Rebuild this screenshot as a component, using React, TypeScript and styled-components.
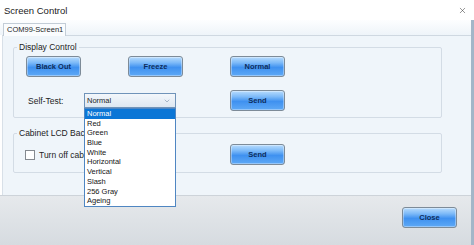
import styled, { createGlobalStyle } from 'styled-components';
import { X, ChevronDown } from 'lucide-react';

const GlobalStyle = createGlobalStyle`
  html, body {
    margin: 0;
    padding: 0;
    background: #fff;
  }
  body {
    font-family: "Liberation Sans", Arial, sans-serif;
    color: #1e1e1e;
  }
`;

const patterns = [
  'Normal',
  'Red',
  'Green',
  'Blue',
  'White',
  'Horizontal',
  'Vertical',
  'Slash',
  '256 Gray',
  'Ageing',
];

const Window = styled.div`
  width: 474px;
  height: 245px;
  display: flex;
  flex-direction: column;
  overflow: hidden;
  background: #fff;
`;

const TitleBar = styled.div`
  height: 20px;
  flex: none;
  display: flex;
  align-items: center;
  justify-content: space-between;
  padding: 0 7px 0 4px;
  font-size: 9.5px;
  color: #222;
  svg {
    color: #3a3a3a;
  }
`;

const Frame = styled.div`
  flex: 1;
  display: flex;
  flex-direction: column;
  border-right: 3px solid #a3b6c8;
  min-height: 0;
`;

const TabStrip = styled.div`
  height: 15px;
  flex: none;
  display: flex;
  align-items: flex-end;
  padding-left: 3px;
  background: linear-gradient(#fdfeff, #eef4f9);
`;

const Tab = styled.div`
  height: 13px;
  width: 63px;
  box-sizing: border-box;
  border: 1px solid #c3cdd7;
  border-bottom: none;
  background: #fafcfe;
  font-size: 7.5px;
  line-height: 12px;
  padding-left: 3px;
  margin-bottom: -1px;
  position: relative;
`;

const Panel = styled.div`
  height: 160px;
  flex: none;
  box-sizing: border-box;
  margin-left: 2px;
  border-top: 1px solid #cfd8e1;
  border-left: 1px solid #d8e0e8;
  background: #eff5fa;
  padding: 6px 0 0 10px;
  display: flex;
  flex-direction: column;
  gap: 10px;
`;

const Group = styled.fieldset`
  margin: 0;
  padding: 0;
  width: 429px;
  min-width: 0;
  box-sizing: border-box;
  border: 1px solid #d3dce5;
  border-radius: 2px;
`;

const Legend = styled.legend`
  padding: 0 2px;
  margin-left: 3px;
  font-size: 8.5px;
  line-height: 10px;
  color: #222;
`;

const GroupBody = styled.div<{ $pad: string }>`
  padding: ${(p) => p.$pad};
  display: flex;
  flex-direction: column;
  gap: 13px;
`;

const Row = styled.div`
  display: flex;
  align-items: center;
  gap: 47px;
`;

const FieldRow = styled.div`
  display: flex;
  align-items: center;
`;

const Btn = styled.button`
  width: 55px;
  height: 21px;
  flex: none;
  padding: 0;
  border: 1px solid #7d8b98;
  border-radius: 3px;
  background: linear-gradient(#b8dcfd 0%, #7dbaf8 30%, #3f91f0 55%, #5ea9f6 100%);
  box-shadow: inset 0 0 0 1px rgba(255, 255, 255, 0.35);
  font-family: "Liberation Sans", Arial, sans-serif;
  font-weight: bold;
  font-size: 7.5px;
  color: #0d2d5c;
`;

const SendBtn = styled(Btn)`
  margin-left: 54px;
`;

const FieldLabel = styled.span`
  width: 58px;
  box-sizing: border-box;
  padding-left: 2px;
  font-size: 8.5px;
`;

const SelectWrap = styled.div`
  position: relative;
  width: 92px;
  height: 15px;
  flex: none;
`;

const SelectBox = styled.div`
  height: 100%;
  box-sizing: border-box;
  border: 1px solid #6f93b9;
  background: linear-gradient(#f3f7fb, #dde7f1);
  display: flex;
  align-items: center;
  justify-content: space-between;
  padding: 0 4px 0 2px;
  font-size: 7.5px;
  svg {
    color: #6d86a3;
  }
`;

const DropList = styled.ul`
  position: absolute;
  left: 0;
  top: 15px;
  width: 92px;
  height: 99px;
  box-sizing: border-box;
  margin: 0;
  padding: 0;
  list-style: none;
  border: 1px solid #4f86c2;
  background: #fff;
  z-index: 5;
`;

const DropItem = styled.li<{ $active?: boolean }>`
  height: 9.7px;
  line-height: 9.7px;
  padding-left: 2px;
  font-size: 7.5px;
  color: ${(p) => (p.$active ? '#fff' : '#151515')};
  background: ${(p) => (p.$active ? '#0b76d6' : 'transparent')};
`;

const CheckLabel = styled.label`
  width: 205px;
  flex: none;
  display: flex;
  align-items: center;
  gap: 4px;
  font-size: 8.5px;
  white-space: nowrap;
  overflow: hidden;
`;

const CheckBox = styled.span`
  width: 10px;
  height: 10px;
  box-sizing: border-box;
  flex: none;
  border: 1px solid #858a90;
  background: #fff;
`;

const Footer = styled.div`
  flex: 1;
  display: flex;
  justify-content: flex-end;
  align-items: flex-start;
  padding: 11px 14px 0 0;
  border-top: 1px solid #cdd3d9;
  background: linear-gradient(#e6e9ec, #d6dbe0);
`;

export default function App() {
  return (
    <Window>
      <GlobalStyle />
      <TitleBar>
        <span>Screen Control</span>
        <X size={9} strokeWidth={1.4} />
      </TitleBar>
      <Frame>
        <TabStrip>
          <Tab>COM99-Screen1</Tab>
        </TabStrip>
        <Panel>
          <Group>
            <Legend>Display Control</Legend>
            <GroupBody $pad="4px 0 6px 12px">
              <Row>
                <Btn>Black Out</Btn>
                <Btn>Freeze</Btn>
                <Btn>Normal</Btn>
              </Row>
              <FieldRow>
                <FieldLabel>Self-Test:</FieldLabel>
                <SelectWrap>
                  <SelectBox>
                    <span>Normal</span>
                    <ChevronDown size={8} strokeWidth={1.6} />
                  </SelectBox>
                  <DropList>
                    {patterns.map((p, i) => (
                      <DropItem key={p} $active={i === 0}>
                        {p}
                      </DropItem>
                    ))}
                  </DropList>
                </SelectWrap>
                <SendBtn>Send</SendBtn>
              </FieldRow>
            </GroupBody>
          </Group>
          <Group>
            <Legend>Cabinet LCD Backlight</Legend>
            <GroupBody $pad="6px 0 7px 11px">
              <FieldRow>
                <CheckLabel>
                  <CheckBox />
                  Turn off cabinet LCD backlight
                </CheckLabel>
                <Btn>Send</Btn>
              </FieldRow>
            </GroupBody>
          </Group>
        </Panel>
        <Footer>
          <Btn>Close</Btn>
        </Footer>
      </Frame>
    </Window>
  );
}
